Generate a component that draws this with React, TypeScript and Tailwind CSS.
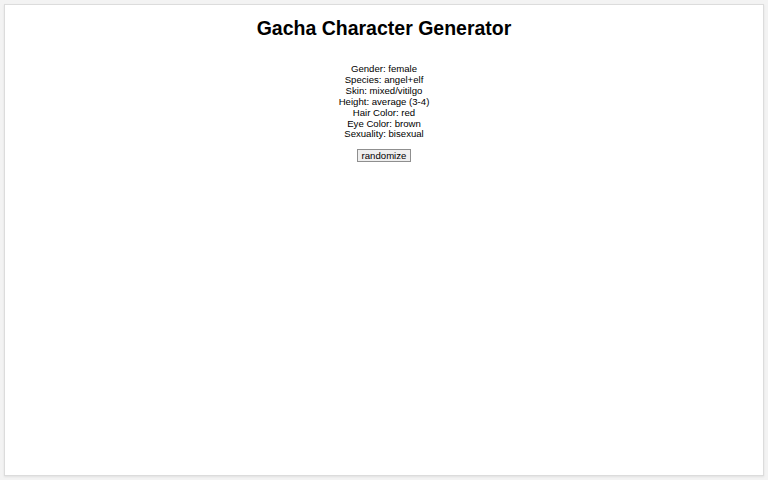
const traits: [string, string][] = [
  ["Gender", "female"],
  ["Species", "angel+elf"],
  ["Skin", "mixed/vitilgo"],
  ["Height", "average (3-4)"],
  ["Hair Color", "red"],
  ["Eye Color", "brown"],
  ["Sexuality", "bisexual"],
];

export default function App() {
  return (
    <div
      className="h-[480px] w-[768px] bg-[#f3f3f3] p-[4px] text-black"
      style={{ fontFamily: '"Liberation Sans", Arial, sans-serif' }}
    >
      <div className="flex h-full flex-col items-center border border-[#dcdcdc] bg-white pt-[12px] shadow-[0_1px_2px_rgba(0,0,0,0.08)]">
        <h1 className="text-[19.5px] font-bold leading-[22.4px]">
          Gacha Character Generator
        </h1>
        <div className="mt-[25px] flex flex-col items-center text-[9.6px] leading-[10.83px]">
          {traits.map(([k, v]) => (
            <div key={k}>
              {k}: {v}
            </div>
          ))}
        </div>
        <button
          type="button"
          className="mt-[9px] h-[13px] border border-[#8f8f8f] bg-[#efefef] px-[4px] text-[9.6px] leading-[11px]"
        >
          randomize
        </button>
      </div>
    </div>
  );
}
